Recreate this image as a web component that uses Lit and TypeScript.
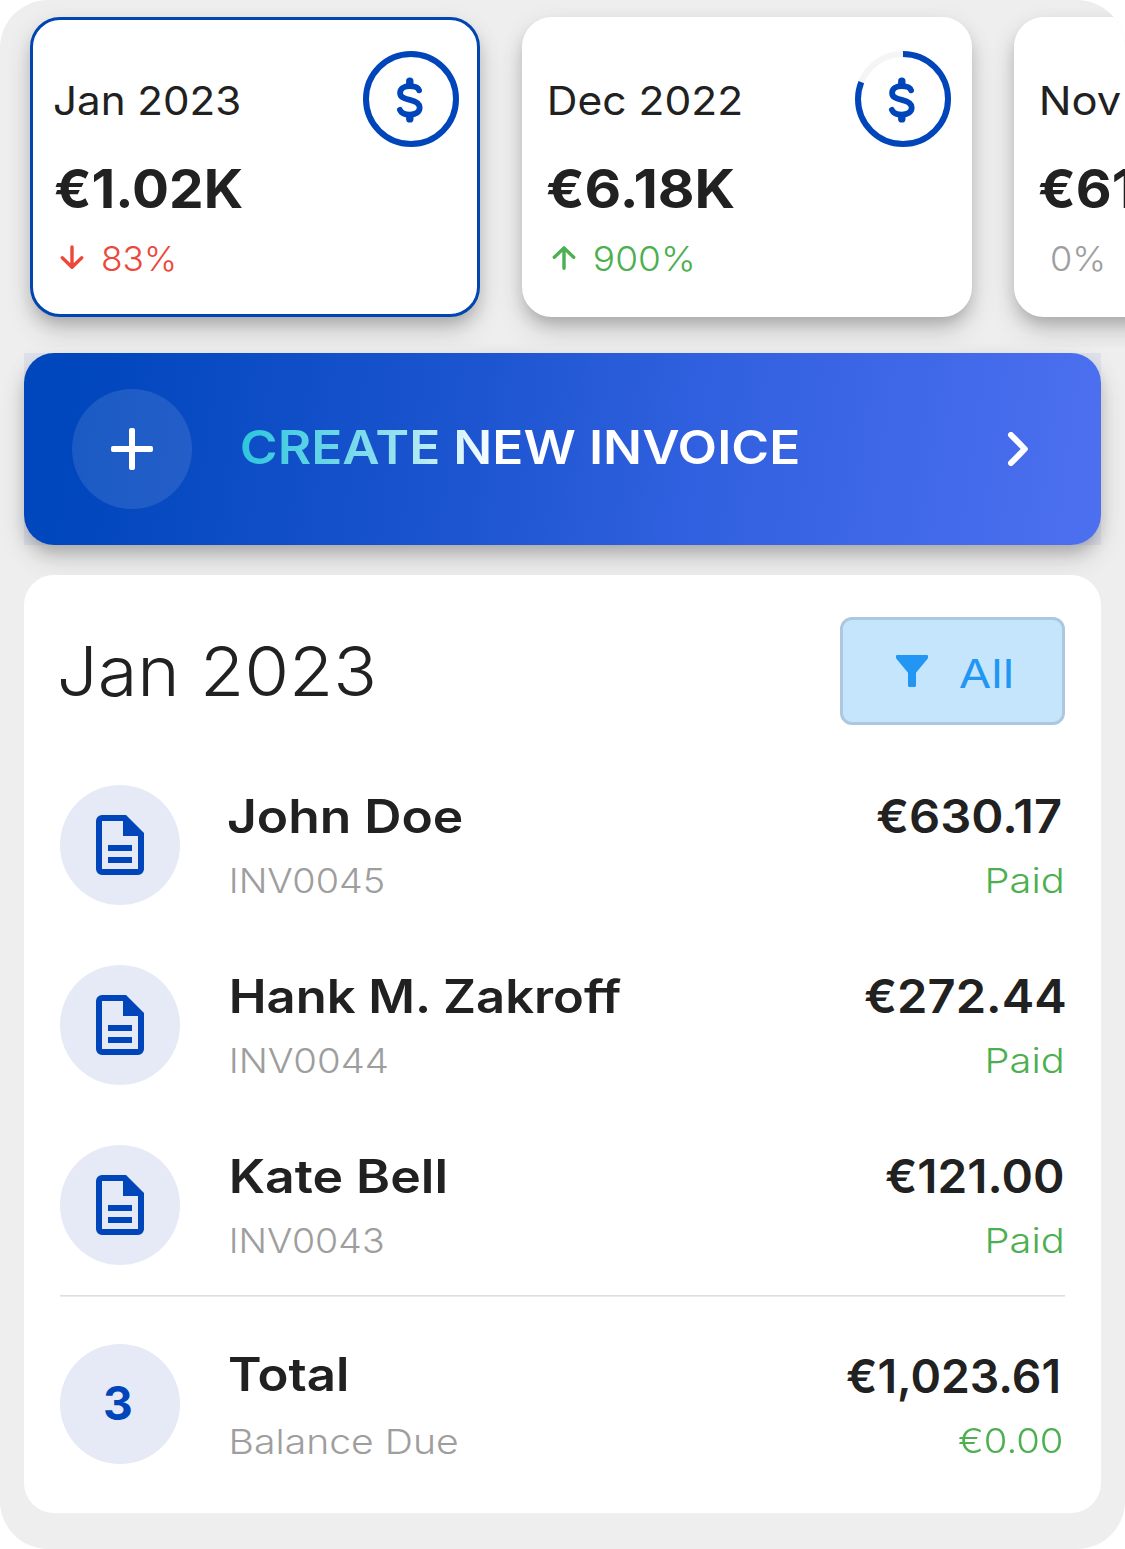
import { LitElement, html, css, svg, nothing } from "lit";
import { customElement, property, state } from "lit/decorators.js";
import { styleMap } from "lit/directives/style-map.js";

/* A line of text whose drawn width is fixed; the glyphs stretch to fill it. */
@customElement("fit-text")
class FitText extends LitElement {
  @property() text = "";
  @property({ type: Number }) ink = 0;
  @property({ type: Number }) start = 0;
  @property({ type: Number }) end = 0;
  @state() private scale = 1;
  @state() private shift = 0;

  static styles = css`
    :host {
      display: block;
      flex: none;
      line-height: 1;
      white-space: pre;
    }
    .line {
      display: block;
      line-height: inherit;
    }
    .glyphs {
      display: inline-block;
      vertical-align: top;
      line-height: inherit;
      transform-origin: 0 50%;
    }
    :host([sheen]) .glyphs {
      color: transparent;
      background: linear-gradient(98deg, #2bc5dc 0%, #90e0ef 27%, #ffffff 46%);
      -webkit-background-clip: text;
      background-clip: text;
    }
  `;

  firstUpdated() {
    const cs = getComputedStyle(this);
    const ctx = document.createElement("canvas").getContext("2d")!;
    ctx.font = `${cs.fontWeight} ${cs.fontSize} ${cs.fontFamily}`;
    const m = ctx.measureText(this.text);
    const drawn = m.actualBoundingBoxLeft + m.actualBoundingBoxRight;
    this.scale = this.ink / drawn;
    this.shift = m.actualBoundingBoxLeft * this.scale;
  }

  render() {
    return html`<span
      class="line"
      style=${styleMap({
        width: `${this.ink}px`,
        marginLeft: `${this.start}px`,
        marginRight: `${this.end}px`,
      })}
      ><span
        class="glyphs"
        style=${styleMap({ transform: `translateX(${this.shift}px) scaleX(${this.scale})` })}
        >${this.text}</span
      ></span
    >`;
  }
}

interface Month {
  label: string;
  labelInk: number;
  labelStart: number;
  amount: string;
  amountInk: number;
  change: string;
  changeInk: number;
  trend: "down" | "up" | "flat";
  paid: number;
}

interface Invoice {
  name: string;
  nameInk: number;
  nameStart: number;
  id: string;
  idInk: number;
  amount: string;
  amountInk: number;
  amountEnd: number;
}

const MONTHS: Month[] = [
  { label: "Jan 2023", labelInk: 185.5, labelStart: 0, amount: "€1.02K", amountInk: 187, change: "83%", changeInk: 70.5, trend: "down", paid: 1 },
  { label: "Dec 2022", labelInk: 190.5, labelStart: 3.5, amount: "€6.18K", amountInk: 187, change: "900%", changeInk: 97, trend: "up", paid: 0.81 },
  { label: "Nov 2022", labelInk: 196, labelStart: 3.5, amount: "€618", amountInk: 131, change: "0%", changeInk: 50.5, trend: "flat", paid: 1 },
];

const INVOICES: Invoice[] = [
  { name: "John Doe", nameInk: 234, nameStart: 0, id: "INV0045", idInk: 151.5, amount: "€630.17", amountInk: 183.5, amountEnd: 4.5 },
  { name: "Hank M. Zakroff", nameInk: 390.5, nameStart: 3.5, id: "INV0044", idInk: 155, amount: "€272.44", amountInk: 200, amountEnd: 0.5 },
  { name: "Kate Bell", nameInk: 212.5, nameStart: 3.5, id: "INV0043", idInk: 150.5, amount: "€121.00", amountInk: 177, amountEnd: 2 },
];

@customElement("month-card")
class MonthCard extends LitElement {
  @property({ attribute: false }) month!: Month;

  static styles = css`
    :host {
      display: block;
      flex: none;
      box-sizing: border-box;
      width: 450px;
      height: 300px;
      padding: 31px 18px 0 21px;
      border: 3px solid #fff;
      border-radius: 30px;
      background: #fff;
      box-shadow: 0 9px 15px -3px rgba(0, 0, 0, 0.19), 0 15px 27px rgba(0, 0, 0, 0.12),
        0 3px 30px rgba(0, 0, 0, 0.04);
    }
    :host([selected]) {
      border-color: #0045b0;
    }
    .top {
      display: flex;
      justify-content: space-between;
      align-items: center;
      height: 96px;
    }
    .label {
      font-size: 40px;
      padding-top: 4px;
    }
    .amount {
      font-size: 53px;
      font-weight: 700;
      line-height: 60px;
      padding: 12px 0 0 1px;
    }
    .change {
      display: flex;
      align-items: center;
      height: 40px;
      margin-top: 19px;
      padding-left: 6px;
      font-size: 34.6px;
      font-weight: 330;
      gap: 18px;
    }
    .down {
      color: #ec4839;
    }
    .up {
      color: #4caf50;
    }
    .flat {
      color: #9e9e9e;
      padding-left: 13.5px;
    }
    .ring,
    .arrow {
      display: block;
      flex: none;
    }
  `;

  render() {
    const m = this.month;
    const circ = 2 * Math.PI * 45;
    return html`
      <div class="top">
        <fit-text class="label" .text=${m.label} .ink=${m.labelInk} .start=${m.labelStart}></fit-text>
        <svg class="ring" width="96" height="96" viewBox="0 0 96 96" fill="none">
          <circle cx="48" cy="48" r="45" stroke="#f5f5f5" stroke-width="6" />
          <circle cx="48" cy="48" r="45" stroke="#0045b9" stroke-width="6" transform="rotate(-90 48 48)"
            stroke-dasharray="${circ * m.paid} ${circ}" />
          <g stroke="#0045b9" stroke-linecap="round" stroke-linejoin="round">
            <path d="M56.1 39.4C55.2 36.4 51.8 35.1 46.8 35.1C41 35.1 37.1 37.7 37.1 41.9C37.1 45.9 40.4 47.4 46.8 48.9C53.2 50.4 56.7 52.2 56.7 56.6C56.7 61.3 52.5 63.6 46.8 63.6C42 63.6 38.2 61.9 36.9 58.8" stroke-width="5.8" />
            <path d="M46.8 30.2V34M46.8 65V67.9" stroke-width="7.4" />
          </g>
        </svg>
      </div>
      <fit-text class="amount" .text=${m.amount} .ink=${m.amountInk}></fit-text>
      <div class="change ${m.trend}">
        ${m.trend === "flat"
          ? nothing
          : html`<svg class="arrow" width="25" height="26" viewBox="0 0 25 26" fill="none" stroke="currentColor"
              stroke-width="3.4" stroke-linecap="round" stroke-linejoin="round">
              ${m.trend === "down"
                ? svg`<path d="M12 1.9V21.9M2.3 12.8L12 22.2L21.7 12.8" />`
                : svg`<path d="M12 23.2V3.2M2.3 12.3L12 2.9L21.7 12.3" />`}
            </svg>`}
        <fit-text .text=${m.change} .ink=${m.changeInk}></fit-text>
      </div>
    `;
  }
}

@customElement("app-root")
class AppRoot extends LitElement {
  static styles = css`
    :host {
      display: block;
      width: 1125px;
      height: 1549px;
      background: #fff;
      color: #212121;
      font-family: Inter, "Open Sans", "Liberation Sans", sans-serif;
      font-size: 40px;
    }
    .page {
      box-sizing: border-box;
      height: 1549px;
      overflow: hidden;
      background: #eee;
      border-radius: 48px;
    }
    .months {
      display: flex;
      box-sizing: border-box;
      gap: 42px;
      height: 347px;
      padding: 17px 0 0 30px;
      overflow: hidden;
    }
    .banner {
      margin: 6px 24px 30px;
      background: #dfe2ea;
    }
    .create {
      display: flex;
      align-items: center;
      box-sizing: border-box;
      height: 192px;
      padding: 0 73px 0 48px;
      border-radius: 30px;
      color: #fff;
      font-size: 46.5px;
      font-weight: 580;
      background: linear-gradient(98deg, #0046bc 5%, #1d55d0 42%, #3060df 62%, #4d70f0 100%);
      box-shadow: 0 9px 15px -3px rgba(0, 0, 0, 0.19), 0 15px 27px rgba(0, 0, 0, 0.12),
        0 3px 30px rgba(0, 0, 0, 0.04);
    }
    .plus {
      display: grid;
      place-items: center;
      width: 120px;
      height: 120px;
      margin-right: 50px;
      border-radius: 50%;
      background: rgba(255, 255, 255, 0.11);
    }
    .create-label {
      padding-bottom: 4px;
    }
    .chevron {
      display: block;
      margin-left: auto;
    }
    .panel {
      position: relative;
      box-sizing: border-box;
      height: 937.5px;
      padding: 42px 36px 0;
      border-radius: 30px;
      margin: 0 24px;
      background: #fff;
    }
    .head {
      display: flex;
      justify-content: space-between;
      height: 108px;
      margin-bottom: 60px;
      align-items: center;
    }
    .title {
      font-size: 69px;
      font-weight: 300;
      padding-top: 1px;
    }
    .filter {
      display: flex;
      align-items: center;
      box-sizing: border-box;
      width: 225px;
      height: 108px;
      gap: 32px;
      padding-left: 53px;
      border: 3px solid #adc8de;
      border-radius: 12px;
      background: #c5e5fd;
      color: #2196f3;
      font-size: 40px;
    }
    .filter-label {
      padding-top: 5px;
    }
    .row {
      display: flex;
      height: 120px;
      margin-bottom: 60px;
    }
    .row.last {
      margin-bottom: 30px;
    }
    .badge {
      display: grid;
      place-items: center;
      width: 120px;
      height: 120px;
      border-radius: 50%;
      background: #e6eaf7;
      color: #0045b9;
      font-size: 47px;
      font-weight: 700;
    }
    .count {
      padding-bottom: 4px;
    }
    .texts {
      display: flex;
      flex-direction: column;
      margin-left: 48px;
    }
    .sums {
      display: flex;
      flex-direction: column;
      align-items: flex-end;
      margin-left: auto;
    }
    .strong {
      font-size: 46px;
      font-weight: 560;
      line-height: 63px;
    }
    .minor {
      font-size: 34.6px;
      font-weight: 330;
      line-height: 64px;
      color: #9e9e9e;
    }
    .minor.paid {
      color: #4caf50;
    }
    .rule {
      height: 2px;
      margin-bottom: 47px;
      background: linear-gradient(#dedede 50%, #ebebeb 50%);
    }
    .total .texts .strong {
      line-height: 60px;
    }
    .total .texts .minor {
      line-height: 74px;
    }
    .total .sums .strong {
      line-height: 65px;
    }
    .total .sums .minor {
      line-height: 62px;
    }
  `;

  private docIcon() {
    return html`<svg width="48" height="60" viewBox="0 0 48 60" fill="#0045b9">
      <path fill-rule="evenodd"
        d="M6 0H30L48 18V54A6 6 0 0 1 42 60H6A6 6 0 0 1 0 54V6A6 6 0 0 1 6 0ZM6 6V54H42V21H27V6Z" />
      <path d="M12 30H36V36H12ZM12 42H36V48H12Z" />
    </svg>`;
  }

  render() {
    return html`
      <div class="page">
        <div class="months">
          ${MONTHS.map((m, i) => html`<month-card ?selected=${i === 0} .month=${m}></month-card>`)}
        </div>

        <div class="banner">
          <div class="create">
            <div class="plus">
              <svg width="42" height="42" viewBox="0 0 42 42" fill="#fff">
                <rect x="0" y="18" width="42" height="6" rx="2" />
                <rect x="18" y="0" width="6" height="42" rx="2" />
              </svg>
            </div>
            <fit-text class="create-label" sheen .text=${"CREATE NEW INVOICE"} .ink=${556}></fit-text>
            <svg class="chevron" width="21" height="34" viewBox="0 0 21 34" fill="none" stroke="#fff"
              stroke-width="6" stroke-linecap="round" stroke-linejoin="round">
              <path d="M4 3L17.8 17L4 31" />
            </svg>
          </div>
        </div>

        <div class="panel">
          <div class="head">
            <fit-text class="title" .text=${"Jan 2023"} .ink=${312} .start=${1}></fit-text>
            <div class="filter">
              <svg class="funnel" width="32" height="32" viewBox="0 0 32 32" fill="currentColor">
                <path d="M1 0H31Q32 0 32 1V2.5Q32 3.4 31.4 4L20 17.8V30.5Q20 32 18.5 32H13.5Q12 32 12 30.5V17.8L.6 4Q0 3.4 0 2.5V1Q0 0 1 0Z" />
              </svg>
              <fit-text class="filter-label" .text=${"All"} .ink=${51}></fit-text>
            </div>
          </div>

          ${INVOICES.map(
            (v, i) => html`<div class="row ${i === INVOICES.length - 1 ? "last" : ""}">
              <div class="badge">${this.docIcon()}</div>
              <div class="texts">
                <fit-text class="strong" .text=${v.name} .ink=${v.nameInk} .start=${v.nameStart}></fit-text>
                <fit-text class="minor" .text=${v.id} .ink=${v.idInk} .start=${3.5}></fit-text>
              </div>
              <div class="sums">
                <fit-text class="strong" .text=${v.amount} .ink=${v.amountInk} .end=${v.amountEnd}></fit-text>
                <fit-text class="minor paid" .text=${"Paid"} .ink=${73.5} .end=${4}></fit-text>
              </div>
            </div>`
          )}
          <div class="rule"></div>
          <div class="row total">
            <div class="badge"><fit-text class="count" .text=${"3"} .ink=${26.5} .end=${3}></fit-text></div>
            <div class="texts">
              <fit-text class="strong" .text=${"Total"} .ink=${117} .start=${0.5}></fit-text>
              <fit-text class="minor" .text=${"Balance Due"} .ink=${225.5} .start=${3.5}></fit-text>
            </div>
            <div class="sums">
              <fit-text class="strong" .text=${"€1,023.61"} .ink=${211.5} .end=${6.5}></fit-text>
              <fit-text class="minor paid" .text=${"€0.00"} .ink=${104} .end=${3}></fit-text>
            </div>
          </div>
        </div>
      </div>
    `;
  }
}
